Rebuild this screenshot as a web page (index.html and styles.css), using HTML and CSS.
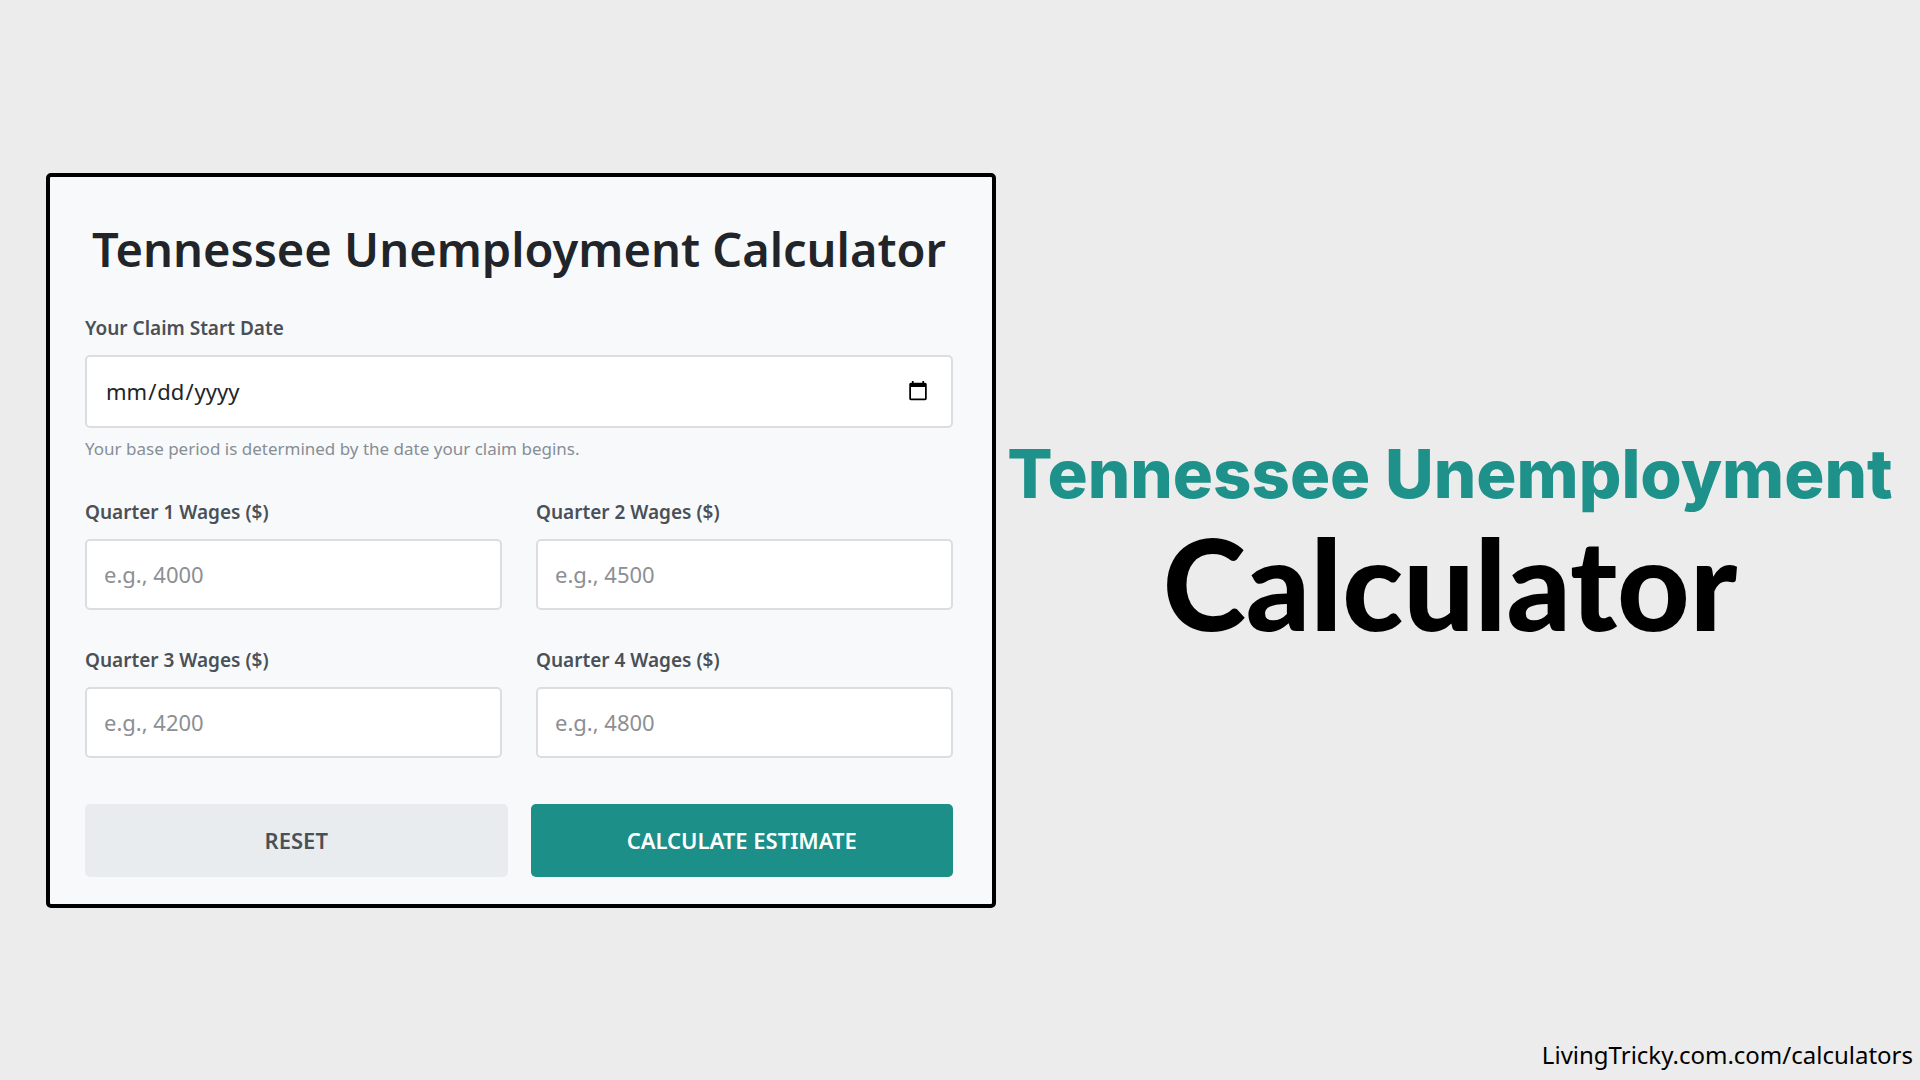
FILE: index.html
```html
<!DOCTYPE html>
<html lang="en">
<head>
  <meta charset="UTF-8" />
  <meta name="viewport" content="width=device-width, initial-scale=1.0" />
  <title>Tennessee Unemployment Calculator</title>
  <link rel="stylesheet" href="styles.css">
</head>
<body>
  <main class="container">
    <!-- Calculator form -->
    <form class="calculator">
      <h1>Tennessee Unemployment Calculator</h1>

      <div class="field">
        <label for="claim-date">Your Claim Start Date</label>
        <input type="date" id="claim-date" aria-describedby="claim-help" />
        <p class="help" id="claim-help">Your base period is determined by the date your claim begins.</p>
      </div>

      <div class="wages">
        <div class="field">
          <label for="q1">Quarter 1 Wages ($)</label>
          <input type="number" id="q1" placeholder="e.g., 4000" />
        </div>
        <div class="field">
          <label for="q2">Quarter 2 Wages ($)</label>
          <input type="number" id="q2" placeholder="e.g., 4500" />
        </div>
        <div class="field">
          <label for="q3">Quarter 3 Wages ($)</label>
          <input type="number" id="q3" placeholder="e.g., 4200" />
        </div>
        <div class="field">
          <label for="q4">Quarter 4 Wages ($)</label>
          <input type="number" id="q4" placeholder="e.g., 4800" />
        </div>
      </div>

      <div class="buttons">
        <button type="reset" class="reset">RESET</button>
        <button type="button" class="calculate">CALCULATE ESTIMATE</button>
      </div>
    </form>

    <!-- Banner title -->
    <h2 class="banner">
      <span class="banner-state">Tennessee Unemployment</span>
      <span class="banner-name">Calculator</span>
    </h2>
  </main>

  <footer>
    <a href="#">LivingTricky.com.com/calculators</a>
  </footer>
</body>
</html>
```

FILE: styles.css
```css
* {
  box-sizing: border-box;
}

body {
  margin: 0;
  background: #ececec;
  font-family: "Noto Sans", "Open Sans", sans-serif;
  position: relative;
}

.container {
  display: grid;
  grid-template-columns: 950fr 908fr;
  align-items: center;
  min-height: 100vh;
  padding: 0 16px 0 46px;
}

.calculator {
  background: #f8f9fb;
  border: 4px solid #000;
  border-radius: 5px;
  padding: 39px 39px 27px 35px;
}

h1 {
  margin: 0 0 32px;
  font-size: 47px;
  line-height: 66px;
  font-weight: 600;
  text-align: center;
  white-space: nowrap;
  color: #212529;
}

.field {
  display: flex;
  flex-direction: column;
}

label {
  margin-bottom: 13px;
  font-size: 19px;
  line-height: 28px;
  font-weight: 600;
  color: #495057;
}

input {
  width: 100%;
  height: 71px;
  padding: 0 17px;
  border: 2px solid #dddddf;
  border-radius: 5px;
  background: #fff;
  font-family: inherit;
  font-size: 22px;
  color: #212529;
}

input[type="date"] {
  height: 73px;
  padding: 0 20px 0 18px;
}

input::placeholder {
  color: #8c8f93;
}

.help {
  margin: 9px 0 0;
  font-size: 17px;
  line-height: 24px;
  color: #868e96;
}

.wages {
  display: grid;
  grid-template-columns: 1fr 1fr;
  gap: 36px 34px;
  margin-top: 37px;
}

.buttons {
  display: grid;
  grid-template-columns: 1fr 1fr;
  gap: 23px;
  margin-top: 46px;
}

button {
  height: 73px;
  border: none;
  border-radius: 5px;
  font-family: inherit;
  font-size: 22px;
  font-weight: 600;
  cursor: pointer;
}

.reset {
  background: #e9ecef;
  color: #495057;
}

.calculate {
  background: #1b8f88;
  color: #fff;
}

.banner {
  margin: 0;
  padding-top: 6px;
  text-align: center;
  white-space: nowrap;
}

.banner span {
  display: block;
}

.banner-state {
  font-family: Inter, sans-serif;
  font-size: 67px;
  line-height: 80px;
  font-weight: 800;
  color: #1f918b;
}

.banner-name {
  font-family: Lato, sans-serif;
  font-size: 126px;
  line-height: 138px;
  font-weight: 900;
  color: #000;
}

footer {
  position: absolute;
  right: 7px;
  bottom: 9px;
  font-size: 24px;
  line-height: 32px;
}

footer a {
  color: #000;
  text-decoration: none;
}
```
